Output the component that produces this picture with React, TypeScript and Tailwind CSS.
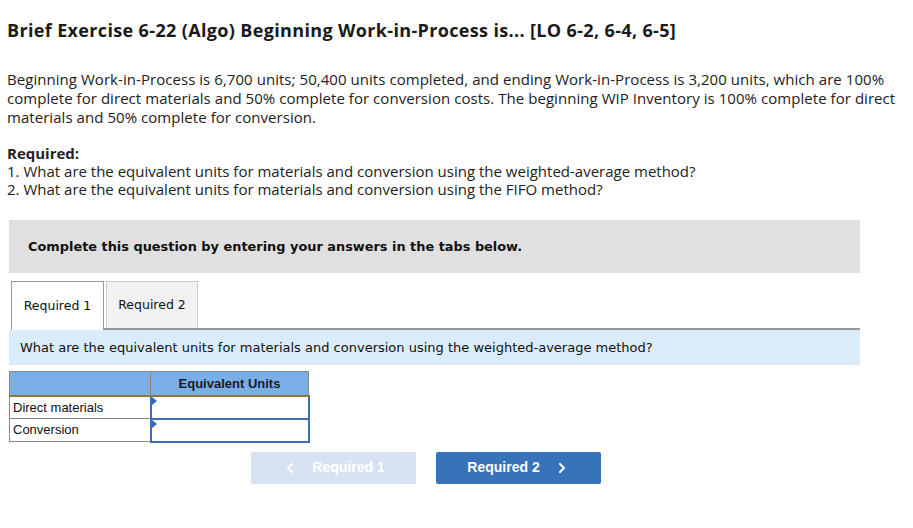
import { ChevronLeft, ChevronRight } from "lucide-react";

const sans = "font-['Open_Sans','Lato',sans-serif]";
const tahoma = "font-['DejaVu_Sans',Verdana,sans-serif]";
const arial = "font-['Liberation_Sans',Arial,sans-serif]";

function InputCell() {
  return (
    <td className="relative border-2 border-[#3b6fb0] bg-white p-0">
      <span className="absolute left-0 top-0 h-0 w-0 border-y-[4px] border-l-[5px] border-y-transparent border-l-[#2f6dc4]" />
      <input className="block h-[18px] w-full bg-transparent px-1 text-[13px] outline-none" />
    </td>
  );
}

export default function App() {
  return (
    <div className="min-h-[528px] w-[913px] bg-white text-[#1a1a1a]">
      <h1 className={`${sans} px-[7px] pt-[18px] text-[18px] font-bold leading-[24px] tracking-[0.35px] text-[#1a1a1a]`}>
        Brief Exercise 6-22 (Algo) Beginning Work-in-Process is... [LO 6-2, 6-4, 6-5]
      </h1>

      <p className={`${sans} mt-[28px] px-[7px] text-[15px] leading-[19px] tracking-[0.05px] text-[#222]`}>
        Beginning Work-in-Process is 6,700 units; 50,400 units completed, and ending Work-in-Process is 3,200 units, which are 100%
        complete for direct materials and 50% complete for conversion costs. The beginning WIP Inventory is 100% complete for direct
        materials and 50% complete for conversion.
      </p>

      <div className={`${sans} mt-[17px] px-[7px] text-[15px] leading-[18px] text-[#222]`}>
        <p className="font-bold">Required:</p>
        <p>1. What are the equivalent units for materials and conversion using the weighted-average method?</p>
        <p>2. What are the equivalent units for materials and conversion using the FIFO method?</p>
      </div>

      <div className="ml-[9px] mt-[22px] flex h-[53px] w-[851px] items-center bg-[#e0e0e0] pl-[19px]">
        <p className={`${tahoma} text-[12.9px] font-bold text-[#111]`}>
          Complete this question by entering your answers in the tabs below.
        </p>
      </div>

      <div className="ml-[11px] mt-[8px] flex w-[849px] items-end gap-[2px] border-b-2 border-[#999]">
        <div className={`${tahoma} -mb-[2px] flex h-[49px] w-[93px] items-center justify-center border border-b-0 border-[#999] bg-white text-[12.5px] text-[#111]`}>
          Required 1
        </div>
        <div className={`${tahoma} flex h-[47px] w-[92px] items-center justify-center border border-b-0 border-[#ccc] bg-[#f2f2f2] text-[12.5px] text-[#111]`}>
          Required 2
        </div>
      </div>

      <div className="ml-[9px] flex h-[35px] w-[851px] items-center bg-[#daecf9] pl-[11px]">
        <p className={`${tahoma} text-[13px] text-[#111]`}>
          What are the equivalent units for materials and conversion using the weighted-average method?
        </p>
      </div>

      <table className={`${arial} ml-[9px] mt-[6px] border-collapse text-[13px]`}>
        <thead>
          <tr className="h-[24px] bg-[#7aaee6]">
            <th className="w-[141px] border border-[#888] border-b-2 border-b-[#8a7a3a]" />
            <th className="w-[158px] border border-[#888] border-b-2 border-b-[#8a7a3a] border-l-[#8a7a3a] text-center font-bold text-[#1a1a2a]">
              Equivalent Units
            </th>
          </tr>
        </thead>
        <tbody>
          <tr className="h-[23px]">
            <td className="border border-[#888] px-[3px] text-[#111]">Direct materials</td>
            <InputCell />
          </tr>
          <tr className="h-[23px]">
            <td className="border border-[#888] px-[3px] text-[#111]">Conversion</td>
            <InputCell />
          </tr>
        </tbody>
      </table>

      <div className={`${arial} ml-[251px] mt-[9px] flex gap-[20px]`}>
        <button className="flex h-[32px] w-[165px] items-center justify-center gap-[14px] rounded-[2px] bg-[#d7e3f2] text-[14px] font-bold text-white">
          <ChevronLeft size={16} strokeWidth={3} />
          Required 1
        </button>
        <button className="flex h-[32px] w-[165px] items-center justify-center gap-[14px] rounded-[2px] bg-[#3872b8] text-[14px] font-bold text-white">
          Required 2
          <ChevronRight size={16} strokeWidth={3} />
        </button>
      </div>
    </div>
  );
}
